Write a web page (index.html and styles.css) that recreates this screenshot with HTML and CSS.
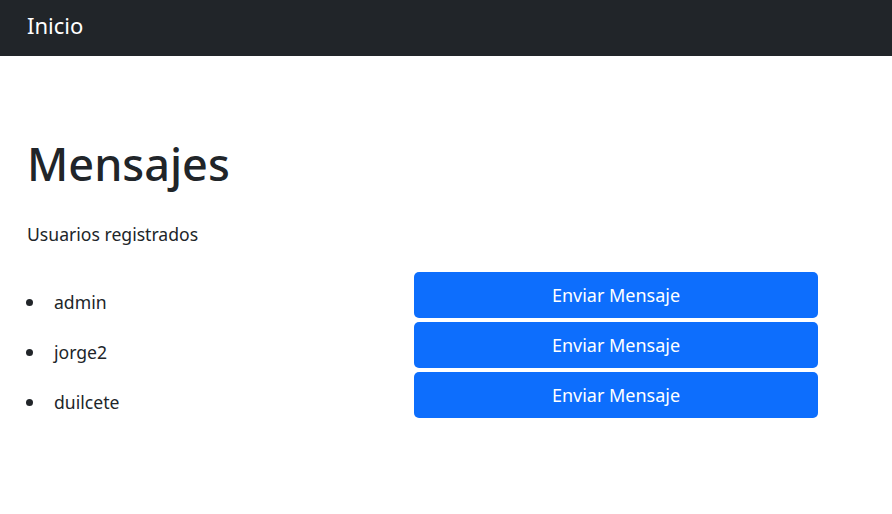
FILE: index.html
```html
<!DOCTYPE html>
<html lang="es">
<head>
<meta charset="utf-8">
<title>Mensajes</title>
<link rel="stylesheet" href="styles.css">
</head>
<body>
<nav class="navbar">
  <a class="brand" href="#">Inicio</a>
</nav>
<main class="content">
  <h1 class="title">Mensajes</h1>
  <p class="subtitle">Usuarios registrados</p>
  <div class="users">
    <ul class="user-list">
      <li class="user">admin</li>
      <li class="user">jorge2</li>
      <li class="user">duilcete</li>
    </ul>
    <div class="actions">
      <button class="btn">Enviar Mensaje</button>
      <button class="btn">Enviar Mensaje</button>
      <button class="btn">Enviar Mensaje</button>
    </div>
  </div>
</main>
</body>
</html>
```
FILE: styles.css
```css
* { box-sizing: border-box; }
html, body { margin: 0; padding: 0; }
body {
  font-family: "Noto Sans", "Open Sans", sans-serif;
  color: #212529;
  background: #fff;
  font-size: 16px;
}
.navbar {
  background: #212529;
  height: 56px;
  display: flex;
  align-items: center;
  padding: 0 27px;
}
.brand {
  color: #fff;
  text-decoration: none;
  font-size: 22px;
  line-height: 1;
  margin-top: -7px;
}
.content {
  padding: 78px 27px 0;
}
.title {
  margin: 0;
  font-size: 45px;
  font-weight: 500;
  line-height: 60px;
}
.subtitle {
  margin: 28px 0 0;
  font-size: 17.6px;
  line-height: 24px;
}
.users {
  display: grid;
  grid-template-columns: 387px 404px;
  margin-top: 26px;
}
.user-list {
  list-style: none;
  margin: 0;
  padding: 0;
  display: flex;
  flex-direction: column;
  gap: 26px;
  padding-top: 18px;
}
.user {
  display: flex;
  align-items: center;
  line-height: 24px;
  font-size: 17.6px;
}
.user::before {
  content: "";
  width: 7px;
  height: 7px;
  border-radius: 50%;
  background: #212529;
  margin-right: 21px;
  margin-left: -1px;
}
.actions {
  display: flex;
  flex-direction: column;
  gap: 4px;
}
.btn {
  height: 46px;
  border: none;
  border-radius: 5px;
  background: #0d6efd;
  color: #fff;
  font-family: inherit;
  font-size: 18px;
  padding: 0 16px;
}
```
